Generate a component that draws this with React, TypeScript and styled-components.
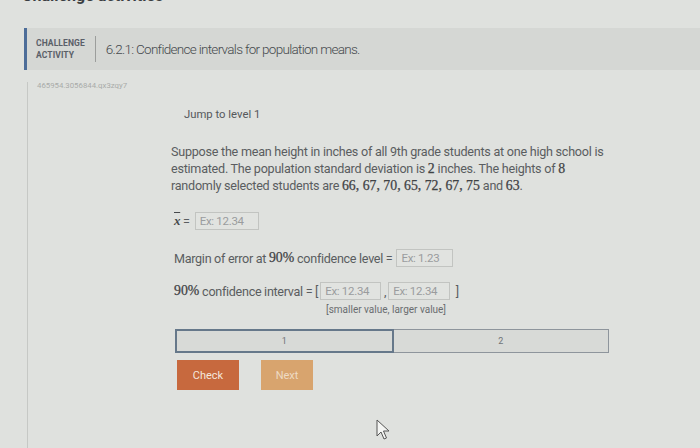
import React from "react";
import styled, { createGlobalStyle } from "styled-components";

const Global = createGlobalStyle`
  html, body { margin: 0; padding: 0; }
  body { background: #dfe1de; font-family: Roboto, "Open Sans", "Liberation Sans", sans-serif; }
`;

const Page = styled.div`
  position: relative;
  width: 700px;
  height: 448px;
  overflow: hidden;
  padding-left: 24px;
  box-sizing: border-box;
  background: #dfe1de;
`;

const PageTitle = styled.h1`
  margin: -13px 0 0 -2px;
  font-size: 16px;
  line-height: 18px;
  font-weight: 700;
  color: #3b3e42;
`;

const Band = styled.div`
  margin-top: 23px;
  height: 42px;
  display: flex;
  align-items: center;
  background: #d5d7d4;
  border-left: 3px solid #4d6d99;
`;

const Label = styled.div`
  padding-left: 9px;
  font-size: 8.5px;
  line-height: 12px;
  font-weight: 700;
  color: #5b6068;
  text-transform: uppercase;
  letter-spacing: 0.1px;
`;

const Divider = styled.div`
  width: 1px;
  height: 26px;
  margin-left: 10px;
  background: #9c9e9c;
`;

const Heading = styled.div`
  margin-left: 10px;
  font-size: 13.5px;
  font-weight: 300;
  color: #45494d;
  letter-spacing: -0.7px;
`;

const Panel = styled.div`
  margin-left: 3px;
  height: 367px;
  box-sizing: border-box;
  border-left: 1px solid #c6c8c5;
  border-bottom: 1px solid #bfc1be;
  padding-left: 9px;
`;

const Code = styled.div`
  margin-top: 12px;
  font-size: 7.8px;
  line-height: 8px;
  color: #a9aba9;
`;

const Main = styled.div`
  margin-left: 134px;
  width: 460px;
  color: #55585b;
`;

const Jump = styled.div`
  margin: 18px 0 0 13px;
  font-size: 11.3px;
  line-height: 14px;
  color: #55585b;
`;

const Para = styled.p`
  margin: 21px 0 0;
  font-size: 12.6px;
  line-height: 17px;
  letter-spacing: -0.25px;
  white-space: nowrap;
  color: #5a5d60;
`;

const M = styled.span`
  font-family: "Liberation Serif", "DejaVu Serif", serif;
  font-size: 13.8px;
  font-weight: 400;
  color: #3f4245;
  letter-spacing: 0;
  -webkit-text-stroke: 0.25px #3f4245;
`;

const Row = styled.div<{ $mt: number }>`
  display: flex;
  align-items: center;
  height: 18px;
  margin-top: ${(p) => p.$mt}px;
  padding-left: 3px;
  font-size: 12.6px;
  letter-spacing: -0.3px;
  color: #5a5d60;
  white-space: nowrap;
`;

const Sym = styled.span`
  font-family: "Liberation Serif", "DejaVu Serif", serif;
  font-style: italic;
  font-weight: 700;
  font-size: 13px;
  text-decoration: overline;
  color: #46494c;
`;

const Input = styled.div<{ $w: number; $ml?: number }>`
  width: ${(p) => p.$w}px;
  height: 18px;
  margin-left: ${(p) => p.$ml ?? 4}px;
  box-sizing: border-box;
  border: 1px solid #c2c4c1;
  background: #e1e3e0;
  padding-left: 4px;
  display: flex;
  align-items: center;
  font-size: 11.5px;
  color: #9a9c9e;
  letter-spacing: -0.3px;
`;

const Hint = styled.div`
  margin: 4px 0 0 155px;
  font-size: 10px;
  line-height: 12px;
  color: #6a6d70;
`;

const Progress = styled.div`
  margin: 13px 0 0 4px;
  width: 434px;
  height: 24px;
  display: flex;
`;

const Segment = styled.div<{ $active?: boolean }>`
  flex: 1;
  box-sizing: border-box;
  display: flex;
  align-items: center;
  justify-content: center;
  background: #d8dad7;
  border: ${(p) => (p.$active ? "2px solid #66788a" : "1px solid #8e959c")};
  ${(p) => (p.$active ? "" : "border-left: none;")}
  font-size: 9px;
  color: #707478;
`;

const Buttons = styled.div`
  display: flex;
  gap: 22px;
  margin: 7px 0 0 6px;
`;

const Button = styled.div<{ $disabled?: boolean }>`
  height: 30px;
  box-sizing: border-box;
  width: ${(p) => (p.$disabled ? 52 : 62)}px;
  display: flex;
  align-items: center;
  justify-content: center;
  background: ${(p) => (p.$disabled ? "#d8a46e" : "#c7693e")};
  color: ${(p) => (p.$disabled ? "#eedbc4" : "#f4e6dc")};
  font-size: 11px;
`;

const Cursor = styled.svg`
  position: absolute;
  left: 376px;
  top: 419px;
`;

export default function App() {
  return (
    <>
      <Global />
      <Page>
        <PageTitle>Challenge activities</PageTitle>
        <Band>
          <Label>
            Challenge
            <br />
            Activity
          </Label>
          <Divider />
          <Heading>6.2.1: Confidence intervals for population means.</Heading>
        </Band>
        <Panel>
          <Code>465954.3056844.qx3zqy7</Code>
          <Main>
            <Jump>Jump to level 1</Jump>
            <Para>
              Suppose the mean height in inches of all 9th grade students at one high school is
              <br />
              estimated. The population standard deviation is <M>2</M> inches. The heights of <M>8</M>
              <br />
              randomly selected students are <M>66, 67, 70, 65, 72, 67, 75</M> and <M>63</M>.
            </Para>
            <Row $mt={18}>
              <Sym>x</Sym>&nbsp;=
              <Input $w={64} $ml={5}>Ex: 12.34</Input>
            </Row>
            <Row $mt={19}>
              Margin of error at&nbsp;<M>90%</M>&nbsp;confidence level =
              <Input $w={57}>Ex: 1.23</Input>
            </Row>
            <Row $mt={15}>
              <M>90%</M>&nbsp;confidence interval = [
              <Input $w={61} $ml={2}>Ex: 12.34</Input>
              &nbsp;,
              <Input $w={62} $ml={2}>Ex: 12.34</Input>
              &nbsp;&nbsp;]
            </Row>
            <Hint>[smaller value, larger value]</Hint>
            <Progress>
              <Segment $active>1</Segment>
              <Segment>2</Segment>
            </Progress>
            <Buttons>
              <Button>Check</Button>
              <Button $disabled>Next</Button>
            </Buttons>
          </Main>
        </Panel>
        <Cursor width="16" height="22" viewBox="0 0 16 22">
          <path d="M1 1 L1 17 L5 13 L8 20 L10.5 19 L7.5 12 L13 12 Z" fill="#f4f5f3" stroke="#555" strokeWidth="1" strokeLinejoin="round" />
        </Cursor>
      </Page>
    </>
  );
}
